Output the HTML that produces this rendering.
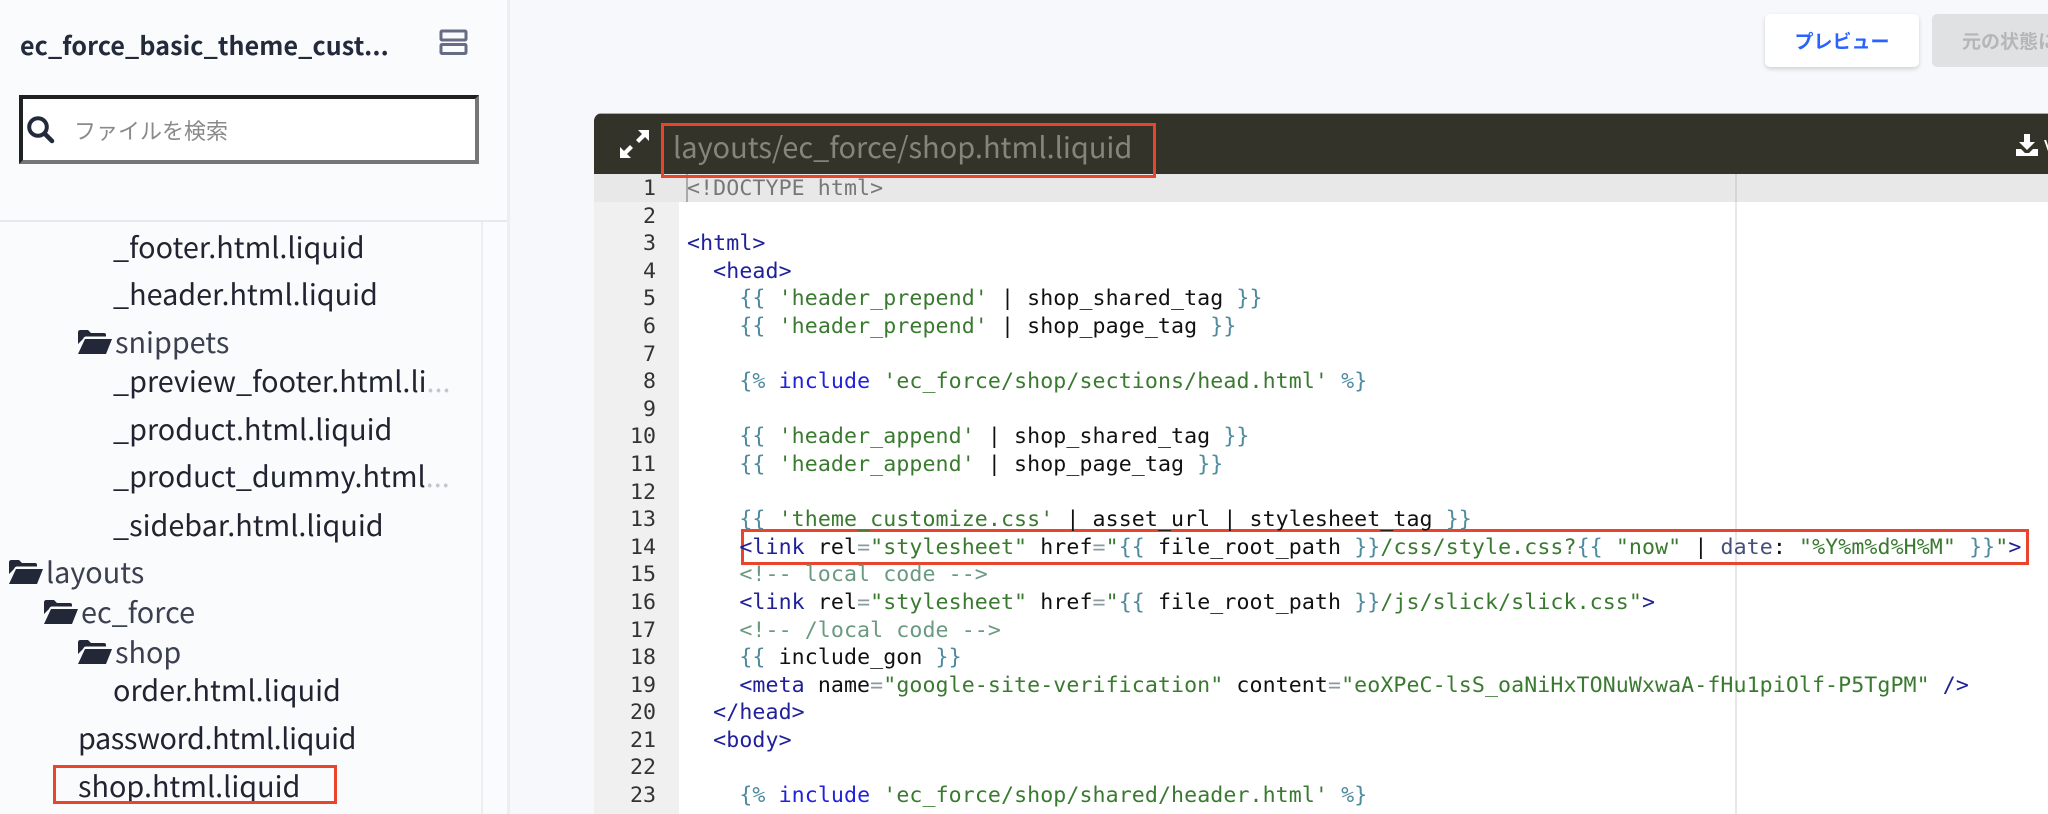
<!DOCTYPE html>
<html lang="ja"><head><meta charset="utf-8"><title>ec_force</title>
<style>
html,body{margin:0;padding:0}
body{width:2048px;height:814px;overflow:hidden;position:relative;background:#f7f8fb;font-family:"Liberation Sans","Noto Sans CJK JP",sans-serif}
.a{position:absolute}
#side{left:0;top:0;width:507px;height:814px;background:#fafbfd;border-right:3px solid #eceef2}
.f{position:absolute;font-family:"Noto Sans CJK JP","Liberation Sans",sans-serif;font-size:28.8px;line-height:40px;height:40px;color:#1f2430;white-space:nowrap}
.d{color:#3a4050}
.dim{color:#c4c6cc}
svg.fo{position:absolute;width:35px;height:26px}
.red{position:absolute;border:3px solid #e8452c;box-sizing:border-box}
#code{position:absolute;left:687px;top:175px;font-family:"DejaVu Sans Mono","Liberation Mono",monospace;font-size:21.6px;letter-spacing:.08px;line-height:27.6px;white-space:pre;color:#111}
#nums{position:absolute;left:594px;width:62px;top:175px;font-family:"DejaVu Sans Mono","Liberation Mono",monospace;font-size:21.6px;line-height:27.6px;text-align:right;color:#333;white-space:pre}
.t{color:#20209a}.b{color:#4f8a9e}.s{color:#3a7a30}.c{color:#6a9a80}.g{color:#777}.k{color:#2222dd}.e{color:#8a9aa0}.y{color:#44507a}
</style></head><body>

<div id="side" class="a"></div>
<div class="a" style="left:0;top:220px;width:507px;height:2px;background:#e8e9ee"></div>
<div class="a" style="left:481px;top:222px;width:2px;height:592px;background:#eceef2"></div>

<div class="a" style="left:20px;top:25px;font-family:'Noto Sans CJK JP','Liberation Sans',sans-serif;font-weight:700;font-size:25px;line-height:40px;color:#232a3b;white-space:nowrap;letter-spacing:.12px">ec_force_basic_theme_cust...</div>
<svg class="a" style="left:439px;top:29px" width="29" height="27" viewBox="0 0 29 27"><rect x="2" y="2" width="25" height="9" rx="1" fill="none" stroke="#666c84" stroke-width="3"/><rect x="2" y="15.500" width="25" height="9" rx="1" fill="none" stroke="#666c84" stroke-width="3"/></svg>

<div class="a" style="left:19px;top:95px;width:460px;height:69px;box-sizing:border-box;background:#fff;border:4px solid;border-color:#1e2022 #767676 #767676 #1e2022"></div>
<svg class="a" style="left:26px;top:115px" width="30" height="30" viewBox="0 0 30 30"><circle cx="12" cy="12" r="8.800" fill="none" stroke="#232a3b" stroke-width="4"/><path d="M18.500 18.500L26 26" stroke="#232a3b" stroke-width="4.500" stroke-linecap="round"/></svg>
<div class="a" style="left:74px;top:112px;font-family:'Noto Sans CJK JP',sans-serif;font-size:22px;line-height:36px;color:#8a8a8a;white-space:nowrap">ファイルを検索</div>

<div class="f" style="left:113px;top:227px">_footer.html.liquid</div>
<div class="f" style="left:113px;top:274px">_header.html.liquid</div>
<svg class="fo" style="left:77px;top:329px" viewBox="0 0 35 26"><path d="M1 15V3.500Q1 1 3.500 1H11L14 4H27Q29 4 29 6V7.500H9Q7 7.500 6 10Z M8 10H35L29 25H1Z" fill="#232838"/></svg>
<div class="f d" style="left:115px;top:322px">snippets</div>
<div class="f" style="left:113px;top:361px">_preview_footer.html.li<span class="dim">...</span></div>
<div class="f" style="left:113px;top:409px">_product.html.liquid</div>
<div class="f" style="left:113px;top:456px">_product_dummy.html<span class="dim">...</span></div>
<div class="f" style="left:113px;top:505px">_sidebar.html.liquid</div>
<svg class="fo" style="left:8px;top:559px" viewBox="0 0 35 26"><path d="M1 15V3.500Q1 1 3.500 1H11L14 4H27Q29 4 29 6V7.500H9Q7 7.500 6 10Z M8 10H35L29 25H1Z" fill="#232838"/></svg>
<div class="f d" style="left:46px;top:552px">layouts</div>
<svg class="fo" style="left:43px;top:599px" viewBox="0 0 35 26"><path d="M1 15V3.500Q1 1 3.500 1H11L14 4H27Q29 4 29 6V7.500H9Q7 7.500 6 10Z M8 10H35L29 25H1Z" fill="#232838"/></svg>
<div class="f d" style="left:81px;top:592px">ec_force</div>
<svg class="fo" style="left:77px;top:639px" viewBox="0 0 35 26"><path d="M1 15V3.500Q1 1 3.500 1H11L14 4H27Q29 4 29 6V7.500H9Q7 7.500 6 10Z M8 10H35L29 25H1Z" fill="#232838"/></svg>
<div class="f d" style="left:115px;top:632px">shop</div>
<div class="f" style="left:113px;top:670px">order.html.liquid</div>
<div class="f" style="left:78px;top:718px;letter-spacing:-.4px">password.html.liquid</div>
<div class="f" style="left:78px;top:766px">shop.html.liquid</div>
<div class="red" style="left:53px;top:765px;width:284px;height:39px"></div>

<div class="a" style="left:1765px;top:14px;width:154px;height:53px;background:#fff;border-radius:5px;box-shadow:0 2px 4px rgba(0,0,0,.16);text-align:center;font-family:'Noto Sans CJK JP',sans-serif;font-weight:700;font-size:19px;line-height:53px;color:#2962ff">プレビュー</div>
<div class="a" style="left:1932px;top:14px;width:160px;height:53px;background:#e0e1e2;border-radius:5px;font-family:'Noto Sans CJK JP',sans-serif;font-weight:700;font-size:19px;line-height:53px;color:#b5b6b7;white-space:nowrap;padding-left:30px;box-sizing:border-box">元の状態に戻す</div>

<div class="a" style="left:594px;top:113px;width:1454px;height:701px;background:#fff;border-radius:8px 0 0 0;overflow:hidden">
  <div class="a" style="left:0;top:0;width:1454px;height:61px;background:#333329;border-top:1px solid #aaa;box-sizing:border-box"></div>
  <div class="a" style="left:0;top:61px;width:85px;height:640px;background:#f0f0f0"></div>
  <div class="a" style="left:0;top:61px;width:1454px;height:28px;background:#e8e8e8"></div>
  <div class="a" style="left:1141px;top:61px;width:2px;height:640px;background:#e8e8e8"></div>
  <div class="a" style="left:1141px;top:61px;width:2px;height:28px;background:#d6d6d6"></div>
  <div class="a" style="left:92px;top:61px;width:2px;height:28px;background:#aaa"></div>
</div>

<svg class="a" style="left:619px;top:129px" width="31" height="30" viewBox="0 0 31 30"><path d="M19 1H30V12L26 8L20 14L17 11L23 5Z M1 29V18L5 22L11 16L14 19L8 25L12 29Z" fill="#fff"/></svg>
<div class="a" style="left:673px;top:126px;font-family:'Noto Sans CJK JP','Liberation Sans',sans-serif;font-size:29px;line-height:40px;color:#85857c;white-space:nowrap">layouts/ec_force/shop.html.liquid</div>
<div class="red" style="left:661px;top:123px;width:495px;height:55px"></div>
<svg class="a" style="left:2015px;top:133px" width="24" height="24" viewBox="0 0 24 24"><path d="M9 1H15V9H20L12 17L4 9H9Z M1 16H6L10 20H14L18 16H23V23H1Z" fill="#fff"/></svg>
<div class="a" style="left:2044px;top:130px;font-family:'Liberation Sans',sans-serif;font-size:22px;line-height:30px;color:#fff">v</div>

<div class="red" style="left:741px;top:529px;width:1288px;height:36px"></div>
<div id="nums">1
2
3
4
5
6
7
8
9
10
11
12
13
14
15
16
17
18
19
20
21
22
23</div>
<div id="code"><span class="g">&lt;!DOCTYPE html&gt;</span>

<span class="t">&lt;html&gt;</span>
  <span class="t">&lt;head&gt;</span>
    <span class="b">{{</span> <span class="s">'header_prepend'</span> | shop_shared_tag <span class="b">}}</span>
    <span class="b">{{</span> <span class="s">'header_prepend'</span> | shop_page_tag <span class="b">}}</span>

    <span class="b">{%</span> <span class="k">include</span> <span class="s">'ec_force/shop/sections/head.html'</span> <span class="b">%}</span>

    <span class="b">{{</span> <span class="s">'header_append'</span> | shop_shared_tag <span class="b">}}</span>
    <span class="b">{{</span> <span class="s">'header_append'</span> | shop_page_tag <span class="b">}}</span>

    <span class="b">{{</span> <span class="s">'theme_customize.css'</span> | asset_url | stylesheet_tag <span class="b">}}</span>
    <span class="t">&lt;link</span> rel<span class="e">=</span><span class="s">"stylesheet"</span> href<span class="e">=</span><span class="s">"</span><span class="b">{{</span> file_root_path <span class="b">}}</span><span class="s">/css/style.css?</span><span class="b">{{</span> <span class="s">"now"</span> | <span class="y">date</span>: <span class="s">"%Y%m%d%H%M"</span> <span class="b">}}</span><span class="s">"</span><span class="t">&gt;</span>
    <span class="c">&lt;!-- local code --&gt;</span>
    <span class="t">&lt;link</span> rel<span class="e">=</span><span class="s">"stylesheet"</span> href<span class="e">=</span><span class="s">"</span><span class="b">{{</span> file_root_path <span class="b">}}</span><span class="s">/js/slick/slick.css"</span><span class="t">&gt;</span>
    <span class="c">&lt;!-- /local code --&gt;</span>
    <span class="b">{{</span> include_gon <span class="b">}}</span>
    <span class="t">&lt;meta</span> name<span class="e">=</span><span class="s">"google-site-verification"</span> content<span class="e">=</span><span class="s">"eoXPeC-lsS_oaNiHxTONuWxwaA-fHu1piOlf-P5TgPM"</span> <span class="t">/&gt;</span>
  <span class="t">&lt;/head&gt;</span>
  <span class="t">&lt;body&gt;</span>

    <span class="b">{%</span> <span class="k">include</span> <span class="s">'ec_force/shop/shared/header.html'</span> <span class="b">%}</span></div>
</body></html>
